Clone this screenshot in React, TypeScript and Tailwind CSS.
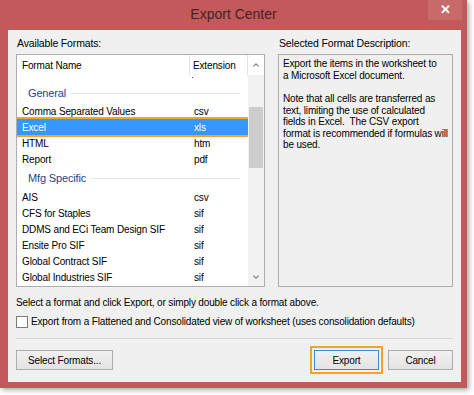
import { ChevronUp, ChevronDown } from "lucide-react";

type Row =
  | { kind: "group"; label: string; h: string }
  | { kind: "item"; name: string; ext: string; selected?: boolean };

const ROWS: Row[] = [
  { kind: "group", label: "General", h: "h-[20px]" },
  { kind: "item", name: "Comma Separated Values", ext: "csv" },
  { kind: "item", name: "Excel", ext: "xls", selected: true },
  { kind: "item", name: "HTML", ext: "htm" },
  { kind: "item", name: "Report", ext: "pdf" },
  { kind: "group", label: "Mfg Specific", h: "h-[22px]" },
  { kind: "item", name: "AIS", ext: "csv" },
  { kind: "item", name: "CFS for Staples", ext: "sif" },
  { kind: "item", name: "DDMS and ECi Team Design SIF", ext: "sif" },
  { kind: "item", name: "Ensite Pro SIF", ext: "sif" },
  { kind: "item", name: "Global Contract SIF", ext: "sif" },
  { kind: "item", name: "Global Industries SIF", ext: "sif" },
];

const DESC_1 = ["Export the items in the worksheet to", "a Microsoft Excel document."];
const DESC_2 = [
  "Note that all cells are transferred as",
  "text, limiting the use of calculated",
  "fields in Excel.\u00a0 The CSV export",
  "format is recommended if formulas will",
  "be used.",
];

function FormatList() {
  return (
    <div className="flex h-[233px] w-[249px] border border-[#abadb3] bg-white">
      <div className="flex w-[231px] flex-col overflow-hidden">
        <div className="flex h-[21px] shrink-0 items-center">
          <div className="flex h-full w-[173px] items-center border-r border-[#e5e5e5] pl-[5px]">Format Name</div>
          <div className="flex h-full flex-1 items-center border-r border-[#e5e5e5] pl-[3px]">Extension</div>
        </div>
        <div className="relative h-[7px] shrink-0">
          <span className="absolute left-[175px] top-[1px] h-[1px] w-[1px] bg-[#555]" />
        </div>
        {ROWS.map((r, i) =>
          r.kind === "group" ? (
            <div key={i} className={`flex ${r.h} shrink-0 items-center pl-[11px] pr-[8px]`}>
              <span className="text-[11px] text-[#1e3f8f]">{r.label}</span>
              <span className="ml-[5px] h-px flex-1 bg-[#dfe5ea]" />
            </div>
          ) : (
            <div
              key={i}
              className={`flex h-[16px] shrink-0 items-center ${
                r.selected ? "bg-[#3399ff] text-white outline-2 outline-[#f5a32b]" : ""
              }`}
            >
              <span className="w-[172px] pl-[5px]">{r.name}</span>
              <span className="pl-[5px]">{r.ext}</span>
            </div>
          )
        )}
      </div>
      <div className="flex w-[16px] flex-col bg-[#f2f2f2]">
        <div className="flex h-[20px] items-center justify-center bg-white">
          <ChevronUp className="h-[10px] w-[10px] text-[#606060]" strokeWidth={2.5} />
        </div>
        <div className="h-[32px]" />
        <div className="mx-auto h-[61px] w-[14px] bg-[#cdcdcd]" />
        <div className="flex-1" />
        <div className="flex h-[18px] items-center justify-center">
          <ChevronDown className="h-[10px] w-[10px] text-[#606060]" strokeWidth={2.5} />
        </div>
      </div>
    </div>
  );
}

function Btn({ label, w, focus }: { label: string; w: string; focus?: boolean }) {
  return (
    <div
      className={`flex h-[20px] ${w} items-center justify-center border bg-gradient-to-b from-[#f0f0f0] to-[#e3e3e3] ${
        focus ? "border-[#3c8ad8] outline-2 outline-offset-[2px] outline-[#f5a32b]" : "border-[#acacac]"
      }`}
    >
      {label}
    </div>
  );
}

export default function App() {
  return (
    <div
      className="h-[395px] w-[474px] overflow-hidden bg-white text-[10px] tracking-[-0.15px] text-black"
      style={{ fontFamily: '"Liberation Sans", Arial, sans-serif' }}
    >
      <div className="flex h-[388px] w-[467px] flex-col bg-[#c25a5c] shadow-[2px_2px_5px_rgba(0,0,0,0.35)]">
        <div className="relative flex h-[30px] shrink-0 items-center justify-center">
          <span className="pb-[1px] text-[14px] tracking-normal text-[#4a1f20]">Export Center</span>
          <div className="absolute right-[5px] top-0 flex h-[20px] w-[34px] items-center justify-center bg-[#c8696a] text-[13px] font-bold text-white">
            ✕
          </div>
        </div>
        <div className="ml-[8px] mr-[6px] flex h-[352px] flex-col bg-[#f0f0f0] px-[8px]">
          <div className="flex gap-[13px] pt-[6px]">
            <div className="flex flex-col">
              <div className="h-[18px] pl-[1px] text-[10.5px] leading-[14px]">Available Formats:</div>
              <FormatList />
            </div>
            <div className="flex flex-col">
              <div className="h-[18px] pl-[1px] text-[10.5px] leading-[14px]">Selected Format Description:</div>
              <div className="h-[233px] w-[175px] overflow-hidden whitespace-nowrap border border-[#abadb3] bg-[#f0f0f0] px-[4px] pt-[3px] text-[10px] leading-[11.5px] tracking-[-0.15px]">
                {DESC_1.map((l) => (
                  <div key={l}>{l}</div>
                ))}
                <div className="mt-[12px]">
                  {DESC_2.map((l) => (
                    <div key={l}>{l}</div>
                  ))}
                </div>
              </div>
            </div>
          </div>
          <div className="mt-[10px] h-[12px] leading-[12px]">
            Select a format and click Export, or simply double click a format above.
          </div>
          <div className="mt-[5px] flex items-center gap-[3px]">
            <span className="h-[12px] w-[12px] border border-[#7a7a7a] bg-white" />
            <span>Export from a Flattened and Consolidated view of worksheet (uses consolidation defaults)</span>
          </div>
          <div className="mt-[9px] h-px bg-[#d5d5d5]" />
          <div className="mt-[11px] flex items-center">
            <Btn label="Select Formats..." w="w-[97px]" />
            <div className="flex-1" />
            <Btn label="Export" w="w-[65px]" focus />
            <div className="w-[9px]" />
            <Btn label="Cancel" w="w-[65px]" />
          </div>
        </div>
      </div>
    </div>
  );
}
